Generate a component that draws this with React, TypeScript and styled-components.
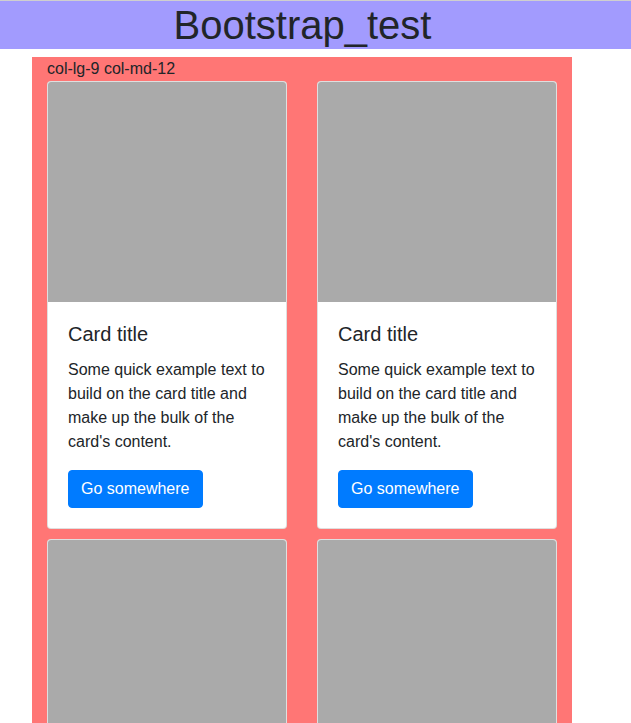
import styled, { createGlobalStyle } from "styled-components";

const GlobalStyle = createGlobalStyle`
  html, body {
    margin: 0;
    padding: 0;
    background: #fff;
  }
  body {
    font-family: "Liberation Sans", Arial, sans-serif;
    font-size: 16px;
    line-height: 1.5;
    color: #212529;
    border-top: 1px solid #cfcfcf;
  }
  * {
    box-sizing: border-box;
  }
`;

const cards = [1, 2, 3, 4];

const App = () => {
  return (
    <>
      <GlobalStyle />
      <Header>Bootstrap_test</Header>
      <Container>
        <Label>col-lg-9 col-md-12</Label>
        <Row>
          {cards.map((id) => (
            <Col key={id}>
              <Card>
                <CardImage />
                <CardBody>
                  <CardTitle>Card title</CardTitle>
                  <CardText>
                    Some quick example text to build on the card title and make
                    up the bulk of the card's content.
                  </CardText>
                  <Button href="#">Go somewhere</Button>
                </CardBody>
              </Card>
            </Col>
          ))}
        </Row>
      </Container>
    </>
  );
};

const Header = styled.h1`
  margin: 0 0 8px;
  height: 48px;
  background-color: #a29bfe;
  font-size: 40px;
  font-weight: 400;
  line-height: 48px;
  text-align: center;
  padding-right: 26px;
`;

const Container = styled.div`
  width: 540px;
  margin-left: 32px;
  padding: 0 15px;
  min-height: 700px;
  background-color: #ff7675;
`;

const Label = styled.div`
  line-height: 24px;
`;

const Row = styled.div`
  display: grid;
  grid-template-columns: 1fr 1fr;
  margin: 0 -15px;
`;

const Col = styled.div`
  padding: 0 15px;
`;

const Card = styled.div`
  display: flex;
  flex-direction: column;
  margin-bottom: 10px;
  background-color: #fff;
  border: 1px solid rgba(0, 0, 0, 0.125);
  border-radius: 4px;
  overflow: hidden;
`;

const CardImage = styled.div`
  height: 220px;
  background-color: #aaaaaa;
`;

const CardBody = styled.div`
  padding: 20px;
`;

const CardTitle = styled.h5`
  margin: 0 0 12px;
  font-size: 20px;
  font-weight: 400;
  line-height: 24px;
`;

const CardText = styled.p`
  margin: 0 0 16px;
`;

const Button = styled.a`
  display: inline-block;
  padding: 6px 12px;
  font-size: 16px;
  line-height: 24px;
  color: #fff;
  background-color: #007bff;
  border: 1px solid #007bff;
  border-radius: 4px;
  text-decoration: none;
`;

export default App;
